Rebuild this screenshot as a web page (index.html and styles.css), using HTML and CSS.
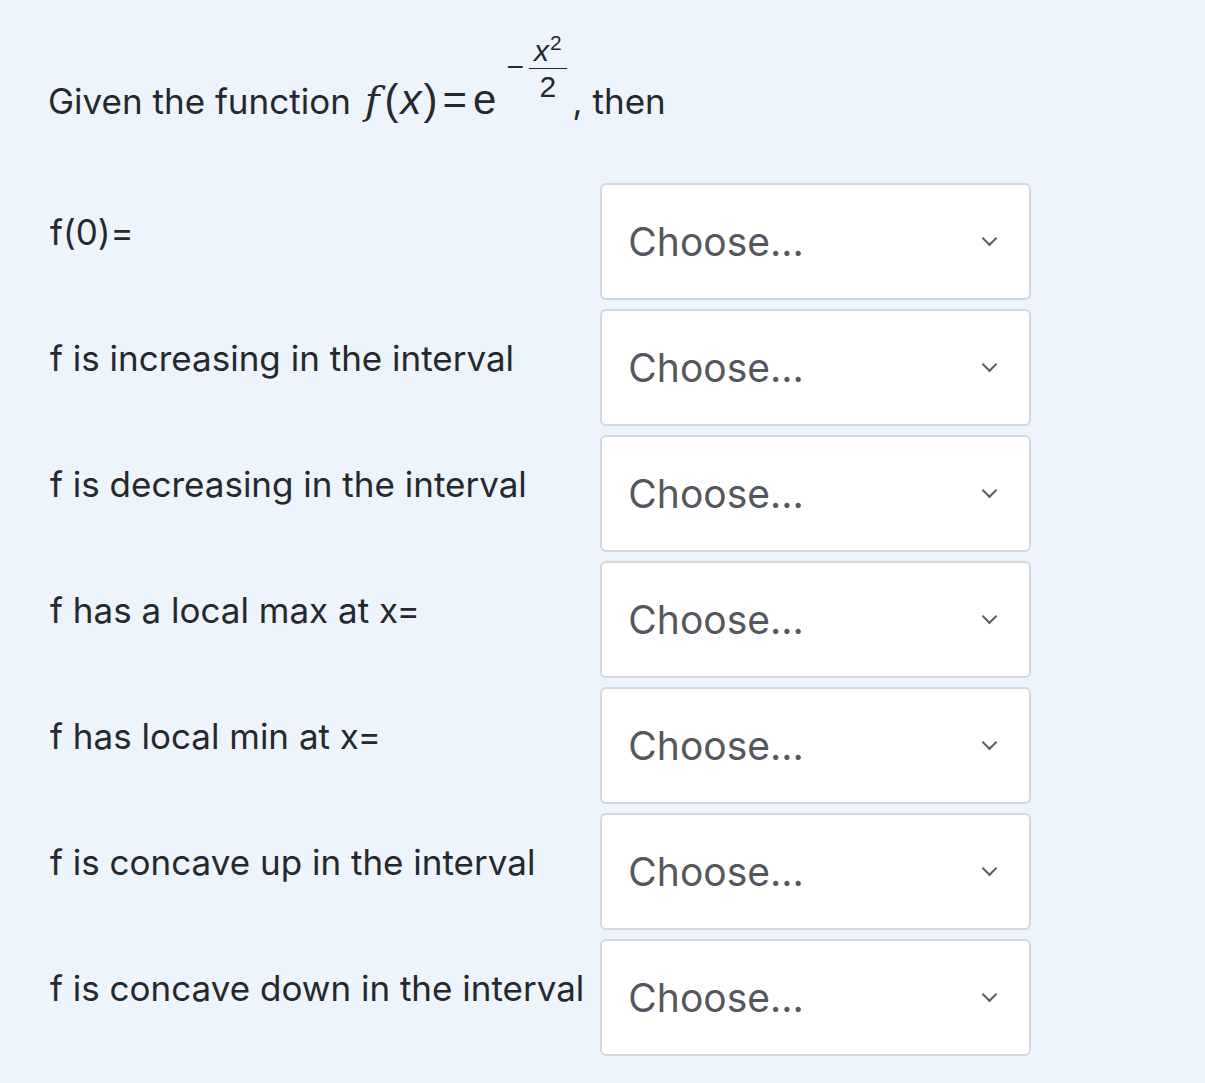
FILE: index.html
```html
<!DOCTYPE html>
<html lang="en">
<head>
    <meta charset="UTF-8" />
    <title>Question</title>
    <link rel="stylesheet" href="styles.css">
</head>
<body>
    <div class="qtext">
        Given the function
        <span class="math"><i class="fn">f</i>(<i>x</i>)<span class="eq">=</span>e<span class="exp"><span class="minus">&minus;</span><span class="frac"><span class="num"><i>x</i><sup>2</sup></span><span class="den">2</span></span></span></span><span class="comma">,</span> then
    </div>

    <form class="answers">
        <label class="lbl" for="a1">f(0)=</label>
        <div class="sel"><select id="a1"><option>Choose...</option></select></div>

        <label class="lbl" for="a2">f is increasing in the interval</label>
        <div class="sel"><select id="a2"><option>Choose...</option></select></div>

        <label class="lbl" for="a3">f is decreasing in the interval</label>
        <div class="sel"><select id="a3"><option>Choose...</option></select></div>

        <label class="lbl" for="a4">f has a local max at x=</label>
        <div class="sel"><select id="a4"><option>Choose...</option></select></div>

        <label class="lbl" for="a5">f has local min at x=</label>
        <div class="sel"><select id="a5"><option>Choose...</option></select></div>

        <label class="lbl" for="a6">f is concave up in the interval</label>
        <div class="sel"><select id="a6"><option>Choose...</option></select></div>

        <label class="lbl" for="a7">f is concave down in the interval</label>
        <div class="sel"><select id="a7"><option>Choose...</option></select></div>
    </form>
</body>
</html>
```

FILE: styles.css
```css
body {
    margin: 0;
    padding: 15px 48px 20px;
    background: #eef4fc;
    font-family: Inter, "Noto Sans", sans-serif;
    color: #25292d;
}

.qtext {
    font-size: 35px;
    padding-top: 54px;
    height: 168px;
    box-sizing: border-box;
    line-height: 1;
}

.math {
    font-family: "Liberation Sans", Arial, sans-serif;
    font-size: 42px;
    letter-spacing: 2px;
    margin-left: 4px;
}

.math i {
    font-style: italic;
}

.math .fn {
    font-family: "DejaVu Serif", serif;
    font-size: 40px;
    margin-right: 3px;
}

.eq {
    margin: 0 4px 0 3px;
}

.exp {
    display: inline-flex;
    align-items: center;
    position: relative;
    top: -37px;
    margin-left: 8px;
    font-size: 30px;
    letter-spacing: 0;
}

.minus {
    margin-right: 5px;
}

.frac {
    display: inline-flex;
    flex-direction: column;
    align-items: center;
}

.num {
    border-bottom: 1.5px solid #25292d;
    padding: 0 5px 2px;
}

.num sup {
    font-size: 21px;
    font-style: normal;
    margin-left: 1px;
}

.den {
    padding-top: 3px;
}

.comma {
    margin-left: 6px;
}

.answers {
    display: grid;
    grid-template-columns: max-content 431px;
    column-gap: 16px;
    row-gap: 9px;
}

.lbl {
    font-size: 35px;
    padding: 28px 0 0 2px;
    line-height: 1.2;
}

.sel {
    position: relative;
}

.sel::after {
    content: "";
    position: absolute;
    right: 36px;
    top: 50px;
    width: 9px;
    height: 9px;
    border-right: 2.5px solid #5a5f65;
    border-bottom: 2.5px solid #5a5f65;
    transform: rotate(45deg);
    pointer-events: none;
}

select {
    appearance: none;
    width: 100%;
    height: 117px;
    background: #fff;
    border: 2px solid #d3d8de;
    border-radius: 6px;
    padding: 0 26px;
    font-family: Inter, "Noto Sans", sans-serif;
    font-size: 39px;
    color: #54585d;
}
```
